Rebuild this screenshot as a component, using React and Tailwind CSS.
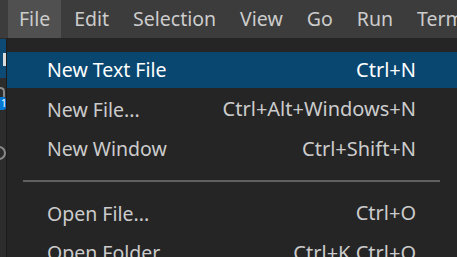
import React from 'react';

const menuBar = ['File', 'Edit', 'Selection', 'View', 'Go', 'Run', 'Terminal'];

const items = [
  { label: 'New Text File', keys: 'Ctrl+N', active: true },
  { label: 'New File...', keys: 'Ctrl+Alt+Windows+N' },
  { label: 'New Window', keys: 'Ctrl+Shift+N' },
  { sep: true },
  { label: 'Open File...', keys: 'Ctrl+O' },
  { label: 'Open Folder', keys: 'Ctrl+K Ctrl+O' },
];

function MenuItem({ label, keys, active }) {
  return (
    <div className="h-[39.5px] py-[2px]">
      <div
        className={
          'h-[35.5px] flex items-center pl-[40px] pr-[41px] ' +
          (active ? 'bg-[#094771] text-white' : 'text-[#cccccc]')
        }
      >
        <span className="flex-1 whitespace-nowrap">{label}</span>
        <span className="whitespace-nowrap text-[20px]">{keys}</span>
      </div>
    </div>
  );
}

export default function App() {
  return (
    <div
      className="w-[457px] h-[257px] overflow-hidden bg-[#252526] flex flex-col"
      style={{ fontFamily: '"Noto Sans", "Open Sans", sans-serif' }}
    >
      {/* title / menu bar */}
      <div className="h-[38px] shrink-0 bg-[#3c3c3c] flex items-stretch pl-[8px] text-[19.5px] text-[#cccccc] whitespace-nowrap">
        {menuBar.map((m, i) => (
          <div
            key={m}
            className={
              'flex items-center ' +
              (i === 0 ? 'bg-[#505050] pl-[11px] pr-[11px]' : 'pl-[13px] pr-[11px]')
            }
          >
            {m}
          </div>
        ))}
      </div>

      <div className="flex flex-1 min-h-0">
        {/* clipped activity bar behind the menu */}
        <div className="w-[7px] shrink-0 bg-[#2c2c2c] flex flex-col border-r border-[#1b1b1b]">
          <div className="h-[39px] mt-[1px] bg-[#0e4a76] pt-[14px] pl-[3px]">
            <div className="w-[3px] h-[13px] bg-[#dddddd]" />
          </div>
          <div className="mt-[9px] ml-[-4px] w-[9px] h-[10px] rounded-t-full border-2 border-b-0 border-[#8a8a8a]" />
          <div className="mt-[0px] h-[13px] w-[6px] bg-[#0078d4] rounded-r-[3px] text-white text-[10px] leading-[13px] pl-[1px]">
            1
          </div>
          <div className="mt-[36px] ml-[-8px] w-[14px] h-[14px] rounded-full border-2 border-[#8a8a8a]" />
        </div>

        {/* dropdown */}
        <div className="flex-1 pt-[12px] text-[19.5px]">
          {items.map((it, i) =>
            it.sep ? (
              <div key={i} className="h-[25px] flex items-center pl-[16px] pr-[17px]">
                <div className="h-[2px] w-full bg-[#606060]" />
              </div>
            ) : (
              <MenuItem key={i} {...it} />
            )
          )}
        </div>
      </div>
    </div>
  );
}
